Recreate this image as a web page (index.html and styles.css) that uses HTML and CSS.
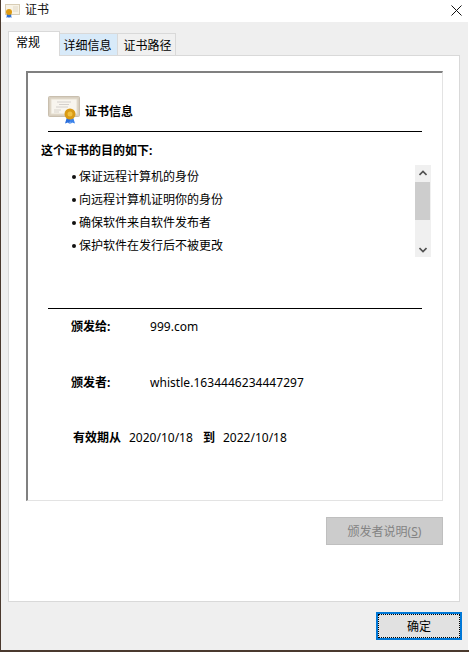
FILE: index.html
```html
<!DOCTYPE html>
<html lang="zh-CN">
<head>
<meta charset="utf-8">
<title>证书</title>
<link rel="stylesheet" href="styles.css">
</head>
<body>
<div class="window">
  <header class="titlebar">
    <svg class="title-icon" width="15" height="14" viewBox="0 0 15 14">
      <rect x="0.5" y="0.5" width="14" height="10" fill="#f8f3e6" stroke="#d8cdb6"/>
      <path d="M8 3h5M8 5h5M8 7h5" stroke="#e0d8c8"/>
      <path d="M2 9l-0.500 5 1.500-1 1 1 0-4zM6 9l0.500 5-1.500-1-1 1 0-4z" fill="#2f6fd0"/>
      <circle cx="4" cy="8" r="3" fill="#dd9a12"/>
    </svg>
    <span class="title-text">证书</span>
    <svg class="close" width="11" height="11" viewBox="0 0 11 11"><path d="M0.5 0.5l10 10M10.5 0.5l-10 10" stroke="#111" stroke-width="1" fill="none"/></svg>
  </header>
  <main class="body">
    <nav class="tabs">
      <div class="tab active">常规</div>
      <div class="tab hover">详细信息</div>
      <div class="tab last">证书路径</div>
    </nav>
    <section class="panel">
      <div class="infobox">
        <div class="cert-head">
          <svg class="cert-icon" width="32" height="28" viewBox="0 0 32 28">
            <rect x="0.5" y="0.5" width="31" height="20" rx="1" fill="#d8cfc0" stroke="#c9bfae"/>
            <rect x="3" y="3" width="26" height="15" fill="#f8f5ee" stroke="#e6dfd0"/>
            <path d="M9 6h14M11 8.500h10M8 11h12" stroke="#d4d0cc" stroke-width="1"/>
            <path d="M6 14h7M6 16h5" stroke="#d9d4cc" stroke-width="1"/>
            <path d="M19 21l-2 6.500 3-1 1.500 1.500 1-6z" fill="#2b6fdc"/>
            <path d="M25 21l2 6.500-3-1-1.500 1.500-1-6z" fill="#3a82ea"/>
            <circle cx="22" cy="18" r="5.500" fill="#d99a14"/>
            <circle cx="22" cy="18" r="2.500" fill="#f0c040"/>
          </svg>
          <span class="cert-title">证书信息</span>
        </div>
        <hr class="rule">
        <div class="purpose-title">这个证书的目的如下:</div>
        <div class="purpose-area">
          <ul class="purposes">
            <li>保证远程计算机的身份</li>
            <li>向远程计算机证明你的身份</li>
            <li>确保软件来自软件发布者</li>
            <li>保护软件在发行后不被更改</li>
          </ul>
          <div class="scrollbar">
            <svg class="arrow" width="8" height="6" viewBox="0 0 8 6"><path d="M0.500 5L4 1.500 7.500 5" stroke="#505050" stroke-width="1.600" fill="none"/></svg>
            <div class="thumb"></div>
            <div class="track-fill"></div>
            <svg class="arrow" width="8" height="6" viewBox="0 0 8 6"><path d="M0.500 1L4 4.500 7.500 1" stroke="#505050" stroke-width="1.600" fill="none"/></svg>
          </div>
        </div>
        <hr class="rule second">
        <div class="field first"><span class="label">颁发给:</span><span class="value">999.com</span></div>
        <div class="field issuer"><span class="label">颁发者:</span><span class="value">whistle.1634446234447297</span></div>
        <div class="validity">
          <span class="v-label">有效期从</span><span class="v-from">2020/10/18</span><span class="v-to">到</span><span class="v-until">2022/10/18</span>
        </div>
      </div>
      <div class="issuer-row"><button class="issuer-btn" disabled>颁发者说明(<u>S</u>)</button></div>
    </section>
    <footer class="footer">
      <button class="ok"><span class="ok-inner">确定</span></button>
    </footer>
  </main>
</div>
</body>
</html>
```
FILE: styles.css
```css
* { box-sizing: border-box; }
html, body { margin: 0; padding: 0; }
body {
  width: 469px;
  height: 652px;
  overflow: hidden;
  background: #4a392e;
  font-family: "Noto Sans", "Noto Sans CJK SC", sans-serif;
  font-size: 12px;
  color: #000;
}
.window {
  margin-left: 1px;
  width: 468px;
  height: 650px;
  display: flex;
  flex-direction: column;
  background: #fff;
}
.titlebar {
  height: 22px;
  display: flex;
  align-items: center;
  padding: 0 7px 4px 4px;
  background: #fff;
}
.title-icon { margin-top: 4px; }
.title-text { margin-left: 5px; color: #111; }
.close { margin-left: auto; margin-top: 3px; margin-right: 0; }
.body {
  flex: 1;
  margin-right: 1px;
  background: #efefef;
  padding: 9px 7px 0 7px;
  display: flex;
  flex-direction: column;
}
.tabs {
  display: flex;
  align-items: flex-end;
  height: 24px;
  position: relative;
  z-index: 1;
}
.tab {
  width: 58px;
  height: 23px;
  margin-bottom: -1px;
  border: 1px solid #d9d9d9;
  border-left: 0;
  border-bottom: 1px solid #d9d9d9;
  background: #f0f0f0;
  display: flex;
  align-items: center;
  justify-content: center;
  padding-top: 1px;
}
.tab.active {
  width: 52px;
  height: 25px;
  border-left: 1px solid #d9d9d9;
  background: #fff;
  border-bottom: 0;
  padding: 0 12px 4px 0;
}
.tab.hover { background: #d8eaf9; padding-right: 2px; }
.tab.last { padding-left: 2px; }
.panel {
  height: 547px;
  margin-right: 1px;
  background: #fff;
  border: 1px solid #d9d9d9;
  padding: 15px 16px 0 17px;
}
.infobox {
  height: 430px;
  border-top: 2px solid #808080;
  border-left: 2px solid #808080;
  border-right: 1px solid #e3e3e3;
  border-bottom: 1px solid #e3e3e3;
  padding: 23px 20px 0 20px;
}
.cert-head {
  height: 28px;
  display: flex;
  align-items: center;
}
.cert-title { margin-left: 5px; font-weight: 700; margin-top: 2px; }
.rule {
  margin: 7px 0 0;
  height: 1px;
  border: 0;
  background: #000;
}
.purpose-title {
  margin: 10px 0 0 -7px;
  height: 17px;
  line-height: 17px;
  font-weight: 700;
}
.purpose-area {
  height: 92px;
  margin-top: 6px;
  display: flex;
  justify-content: space-between;
}
.purposes {
  list-style: none;
  margin: 0;
  padding: 0 0 0 25px;
}
.purposes li {
  height: 23px;
  line-height: 23px;
  position: relative;
  padding-left: 6px;
}
.purposes li::before {
  content: "";
  position: absolute;
  left: -1px;
  top: 10px;
  width: 4px;
  height: 4px;
  border-radius: 50%;
  background: #111;
}
.scrollbar {
  width: 16px;
  margin-right: -9px;
  background: #f0f0f0;
  display: flex;
  flex-direction: column;
  align-items: center;
}
.arrow { flex: none; margin: 5px 0 6px; }
.scrollbar .arrow:last-child { margin: 0 0 4px; }
.thumb { width: 15px; height: 38px; background: #cdcdcd; align-self: flex-start; }
.track-fill { flex: 1; }
.second { margin-top: 51px; }
.field {
  display: flex;
  height: 18px;
  line-height: 18px;
  padding-left: 23px;
}
.field.first { margin-top: 9px; }
.field.issuer { margin-top: 38px; }
.label { width: 79px; font-weight: 700; }
.value { letter-spacing: 0.04px; }
.validity {
  margin-top: 37px;
  height: 18px;
  line-height: 18px;
  padding-left: 25px;
  display: flex;
}
.v-label { width: 56px; font-weight: 700; }
.v-from { width: 74px; }
.v-to { width: 20px; font-weight: 700; }
.issuer-row {
  display: flex;
  justify-content: flex-end;
  margin-top: 16px;
}
.issuer-btn {
  width: 117px;
  height: 28px;
  padding: 0;
  background: #cccccc;
  border: 1px solid #bfbfbf;
  color: #838383;
  font: inherit;
}
.footer {
  display: flex;
  justify-content: flex-end;
  margin: 10px -1px 0 0;
}
.ok {
  width: 86px;
  height: 28px;
  padding: 0;
  background: #e1e1e1;
  border: 2px solid #0078d7;
  font: inherit;
  color: #000;
}
.ok-inner {
  display: flex;
  align-items: center;
  justify-content: center;
  height: 100%;
  border: 1px dotted #000;
}
```
